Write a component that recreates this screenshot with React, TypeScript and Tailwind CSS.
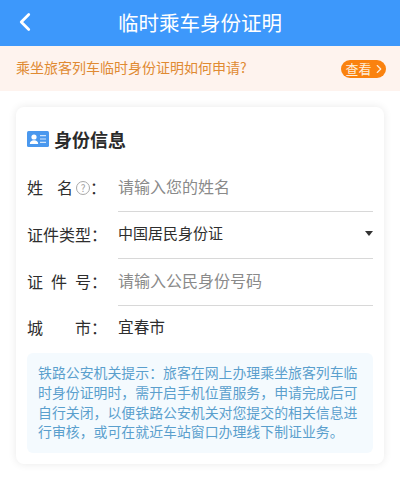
import { ChevronLeft, ChevronRight } from "lucide-react";

const fontStack = "font-['Noto_Sans_CJK_SC','Liberation_Sans',sans-serif]";

const hint =
  "铁路公安机关提示\uFF1A旅客在网上办理乘坐旅客列车临时身份证明时\uFF0C需开启手机位置服务\uFF0C申请完成后可自行关闭\uFF0C以便铁路公安机关对您提交的相关信息进行审核\uFF0C或可在就近车站窗口办理线下制证业务\u3002";

function IdIcon() {
  return (
    <svg width="22" height="16" viewBox="0 0 22 16" className="shrink-0">
      <rect width="22" height="16" rx="1.5" fill="#4a98ee" />
      <circle cx="7" cy="6" r="2.6" fill="#fff" />
      <path d="M2.8 13c0-2.6 1.8-3.8 4.2-3.8s4.2 1.2 4.2 3.8z" fill="#fff" />
      <path d="M13 4.6h6M13 8h6M13 11.4h6" stroke="#cfe4fb" strokeWidth="1.2" />
    </svg>
  );
}

export default function App() {
  return (
    <div className={`w-[400px] h-[480px] overflow-hidden bg-white ${fontStack}`}>
      {/* Header */}
      <div className="h-[46px] bg-[#3d98fb] flex items-center justify-center relative">
        <ChevronLeft size={30} strokeWidth={2.2} className="text-white absolute left-[10px] top-[7px]" />
        <h1 className="text-[20.5px] text-white leading-none pb-[1px]">临时乘车身份证明</h1>
      </div>

      {/* Notice */}
      <div className="h-[45px] bg-[#fef3ee] flex items-center justify-between pl-4 pr-[14px]">
        <p className="text-[14px] text-[#e08a32] pb-[2px]">乘坐旅客列车临时身份证明如何申请?</p>
        <div className="w-[45px] h-[18px] rounded-full bg-[#fa820f] flex items-center justify-center text-[#fdeedd] text-[13px] leading-none">
          查看
          <ChevronRight size={14} strokeWidth={2} className="-mr-[4px]" />
        </div>
      </div>

      {/* Card */}
      <div className="mx-4 mt-4 h-[357px] rounded-lg bg-white shadow-[0_0_8px_rgba(0,0,0,0.09)] px-[11px] pt-5">
        <div className="flex items-center gap-[5px] h-6">
          <IdIcon />
          <h2 className="text-[18px] font-bold text-[#2b2b2b] leading-none">身份信息</h2>
        </div>

        <div className="mt-[14px] text-[16px] text-[#2e2e2e]">
          <div className="flex h-[47px] items-center">
            <div className="w-[91px] flex items-center pb-1">
              <span>姓</span>
              <span className="ml-[14px]">名</span>
              <span className="ml-[3px] mt-[2px] w-[14px] h-[14px] rounded-full border border-[#a8a8a8] text-[#a0a0a0] text-[10px] leading-none flex items-center justify-center">?</span>
              <span>{"\uFF1A"}</span>
            </div>
            <div className="flex-1 h-full border-b border-[#d8d8d8] flex items-center pb-1 text-[#8a8a8a]">请输入您的姓名</div>
          </div>

          <div className="flex h-[47px] items-center">
            <div className="w-[91px] pb-1 whitespace-nowrap">证件类型{"\uFF1A"}</div>
            <div className="flex-1 h-full border-b border-[#d8d8d8] flex items-center justify-between pb-1 text-[15px]">
              <span>中国居民身份证</span>
              <span className="w-0 h-0 border-x-[4.5px] border-x-transparent border-t-[5px] border-t-[#333]" />
            </div>
          </div>

          <div className="flex h-[47px] items-center">
            <div className="w-[91px] flex pb-1">
              <div className="w-[64px] flex justify-between">
                <span>证</span>
                <span>件</span>
                <span>号</span>
              </div>
              <span>{"\uFF1A"}</span>
            </div>
            <div className="flex-1 h-full border-b border-[#d8d8d8] flex items-center pb-1 text-[#8a8a8a]">请输入公民身份号码</div>
          </div>

          <div className="flex h-[45px] items-center">
            <div className="w-[91px] flex pb-1">
              <div className="w-[64px] flex justify-between">
                <span>城</span>
                <span>市</span>
              </div>
              <span>{"\uFF1A"}</span>
            </div>
            <div className="flex-1 pb-1 text-[15.7px]">宜春市</div>
          </div>
        </div>

        <div className="mt-[2px] h-[100px] rounded-md bg-[#f4fafe] pl-[11px] pr-[8px] pt-[10px] text-[13.9px] leading-[19.8px] text-[#5a9fcd]">
          {hint}
        </div>
      </div>
    </div>
  );
}
